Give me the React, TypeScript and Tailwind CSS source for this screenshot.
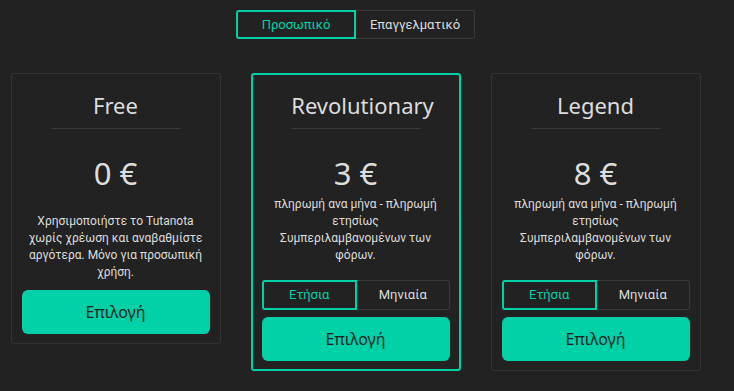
import { useState } from "react"

type Plan = {
  name: string
  price: string
  lines: string[]
  highlighted?: boolean
  interval?: boolean
}

const plans: Plan[] = [
  {
    name: "Free",
    price: "0 €",
    lines: ["Χρησιμοποιήστε το Tutanota", "χωρίς χρέωση και αναβαθμίστε", "αργότερα. Μόνο για προσωπική", "χρήση."],
  },
  {
    name: "Revolutionary",
    price: "3 €",
    lines: ["πληρωμή ανα μήνα - πληρωμή", "ετησίως", "Συμπεριλαμβανομένων των", "φόρων."],
    highlighted: true,
    interval: true,
  },
  {
    name: "Legend",
    price: "8 €",
    lines: ["πληρωμή ανα μήνα - πληρωμή", "ετησίως", "Συμπεριλαμβανομένων των", "φόρων."],
    interval: true,
  },
]

const small = { fontFamily: "Roboto, \"Noto Sans\", sans-serif" }

function IntervalToggle() {
  const [yearly, setYearly] = useState(true)
  return (
    <div className="flex h-[30px] w-full text-[13px]" style={small}>
      <button
        onClick={() => setYearly(true)}
        className={`flex-1 rounded-l-[3px] ${yearly ? "border-2 border-[#00d1a7] text-[#00d1a7]" : "border border-[#3a3a3a] text-[#dddddd]"}`}
      >
        Ετήσια
      </button>
      <button
        onClick={() => setYearly(false)}
        className={`flex-1 rounded-r-[3px] ${!yearly ? "border-2 border-[#00d1a7] text-[#00d1a7]" : "border border-l-0 border-[#3a3a3a] text-[#dddddd]"}`}
      >
        Μηνιαία
      </button>
    </div>
  )
}

function PlanCard({ plan }: { plan: Plan }) {
  return (
    <div
      className={`flex w-[210px] flex-col items-center rounded-[3px] ${
        plan.highlighted ? "border-2 border-[#00d1a7] px-[9px] pb-[8px] pt-[16px]" : "border border-[#333333] px-[10px] pb-[9px] pt-[17px]"
      }`}
    >
      <div className={`${plan.highlighted ? "pl-[14px]" : ""} text-[22px] leading-[28px] text-[#dddddd]`}>{plan.name}</div>
      <div className="mt-[9px] h-px w-[128px] bg-[#3a3a3a]" />
      <div className="mt-[24px] text-[31px] leading-[40px] text-[#dddddd]">{plan.price}</div>
      <div
        className={`${plan.interval ? "mt-[3px]" : "mt-[20px]"} text-center text-[12px] leading-[17px] text-[#dddddd]`}
        style={small}
      >
        {plan.lines.map((l) => (
          <div key={l}>{l}</div>
        ))}
      </div>
      {plan.interval && (
        <div className="mt-[16px] w-full">
          <IntervalToggle />
        </div>
      )}
      <button
        className={`${plan.interval ? "mt-[7px]" : "mt-[9px]"} h-[44px] w-full rounded-[6px] bg-[#00d1a7] text-[16px] text-[#222222]`}
      >
        Επιλογή
      </button>
    </div>
  )
}

export default function App() {
  const [personal, setPersonal] = useState(true)
  return (
    <div
      className="min-h-[391px] w-full bg-[#222222]"
      style={{ fontFamily: '"Noto Sans", "DejaVu Sans", sans-serif' }}
    >
      <div className="flex w-[711px] flex-col items-center pt-[10px]">
        <div className="flex h-[29px] text-[13px]" style={small}>
          <button
            onClick={() => setPersonal(true)}
            className={`w-[120px] rounded-l-[3px] ${personal ? "border-2 border-[#00d1a7] text-[#00d1a7]" : "border border-[#3a3a3a] text-[#dddddd]"}`}
          >
            Προσωπικό
          </button>
          <button
            onClick={() => setPersonal(false)}
            className={`w-[119px] rounded-r-[3px] ${!personal ? "border-2 border-[#00d1a7] text-[#00d1a7]" : "border border-l-0 border-[#3a3a3a] text-[#dddddd]"}`}
          >
            Επαγγελματικό
          </button>
        </div>
        <div className="mt-[34px] flex items-start gap-[30px]">
          {plans.map((p) => (
            <PlanCard key={p.name} plan={p} />
          ))}
        </div>
      </div>
    </div>
  )
}
